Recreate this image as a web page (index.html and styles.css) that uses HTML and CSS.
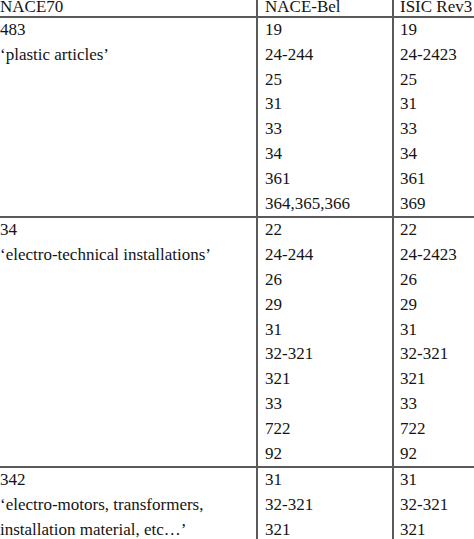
FILE: index.html
```html
<!DOCTYPE html>
<html>
<head>
<meta charset="utf-8">
<link rel="stylesheet" href="styles.css">
</head>
<body>
<div class="table">
  <div class="row head">
    <div class="c1">NACE70</div>
    <div class="c2">NACE-Bel</div>
    <div class="c3">ISIC Rev3</div>
  </div>
  <div class="row">
    <div class="c1"><div>483</div><div>‘plastic articles’</div></div>
    <div class="c2"><div>19</div><div>24-244</div><div>25</div><div>31</div><div>33</div><div>34</div><div>361</div><div>364,365,366</div></div>
    <div class="c3"><div>19</div><div>24-2423</div><div>25</div><div>31</div><div>33</div><div>34</div><div>361</div><div>369</div></div>
  </div>
  <div class="row">
    <div class="c1"><div>34</div><div>‘electro-technical installations’</div></div>
    <div class="c2"><div>22</div><div>24-244</div><div>26</div><div>29</div><div>31</div><div>32-321</div><div>321</div><div>33</div><div>722</div><div>92</div></div>
    <div class="c3"><div>22</div><div>24-2423</div><div>26</div><div>29</div><div>31</div><div>32-321</div><div>321</div><div>33</div><div>722</div><div>92</div></div>
  </div>
  <div class="row">
    <div class="c1"><div>342</div><div>‘electro-motors, transformers, installation material, etc…’</div></div>
    <div class="c2"><div>31</div><div>32-321</div><div>321</div></div>
    <div class="c3"><div>31</div><div>32-321</div><div>321</div></div>
  </div>
</div>
</body>
</html>
```

FILE: styles.css
```css
html, body {
  margin: 0;
  padding: 0;
  background: #ffffff;
  overflow: hidden;
}

.table {
  margin-top: -3px;
  width: 490px;
  font-family: "Liberation Serif", "Times New Roman", serif;
  font-size: 17px;
  color: #141414;
}

.row {
  display: grid;
  grid-template-columns: 256px 136px 1fr;
  border-bottom: 2px solid #5a5a5a;
  line-height: 24.8px;
}

.row.head {
  line-height: 19px;
}

.c1 {
  padding-left: 0;
  padding-right: 4px;
}

.c2 {
  border-left: 2px solid #5a5a5a;
  padding-left: 7px;
}

.c3 {
  border-left: 2px solid #5a5a5a;
  padding-left: 6px;
  white-space: nowrap;
}
```
